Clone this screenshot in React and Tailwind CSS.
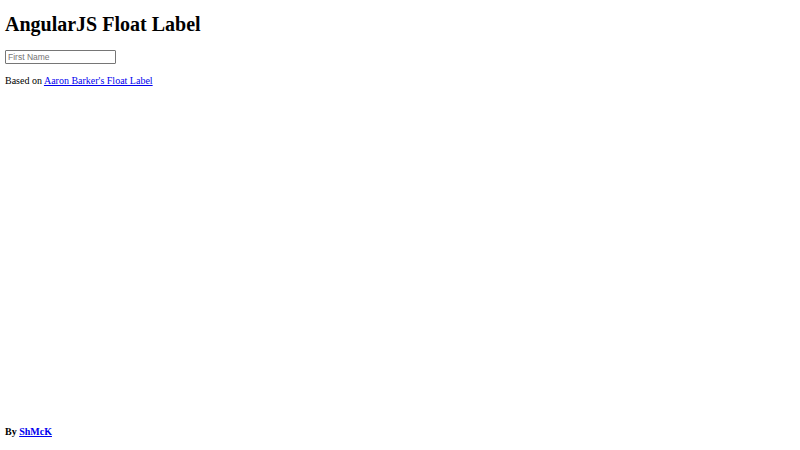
export default function App() {
  return (
    <main className="flex h-[450px] flex-col bg-white p-[5px] text-black [font-family:'Liberation_Serif','Times_New_Roman',serif]">
      <h1 className="mt-[8.4px] mb-[13.4px] text-[20px] font-bold leading-[23px]">
        AngularJS Float Label
      </h1>

      <div className="flex">
        <input
          type="text"
          placeholder="First Name"
          className="h-[14px] w-[111px] rounded-[1px] border border-[#767676] px-[2px] text-[8.5px] leading-[10px] text-black placeholder:text-[#757575] [font-family:'Liberation_Sans',Arial,sans-serif]"
        />
      </div>

      <p className="mt-[11px] text-[10px] leading-[11.5px]">
        Based on{" "}
        <a href="#" className="text-[#0000ee] underline">
          Aaron Barker's Float Label
        </a>
      </p>

      <p className="mt-auto mb-[8px] text-[10px] font-bold leading-[11.5px]">
        By{" "}
        <a href="#" className="text-[#0000ee] underline">
          ShMcK
        </a>
      </p>
    </main>
  );
}
